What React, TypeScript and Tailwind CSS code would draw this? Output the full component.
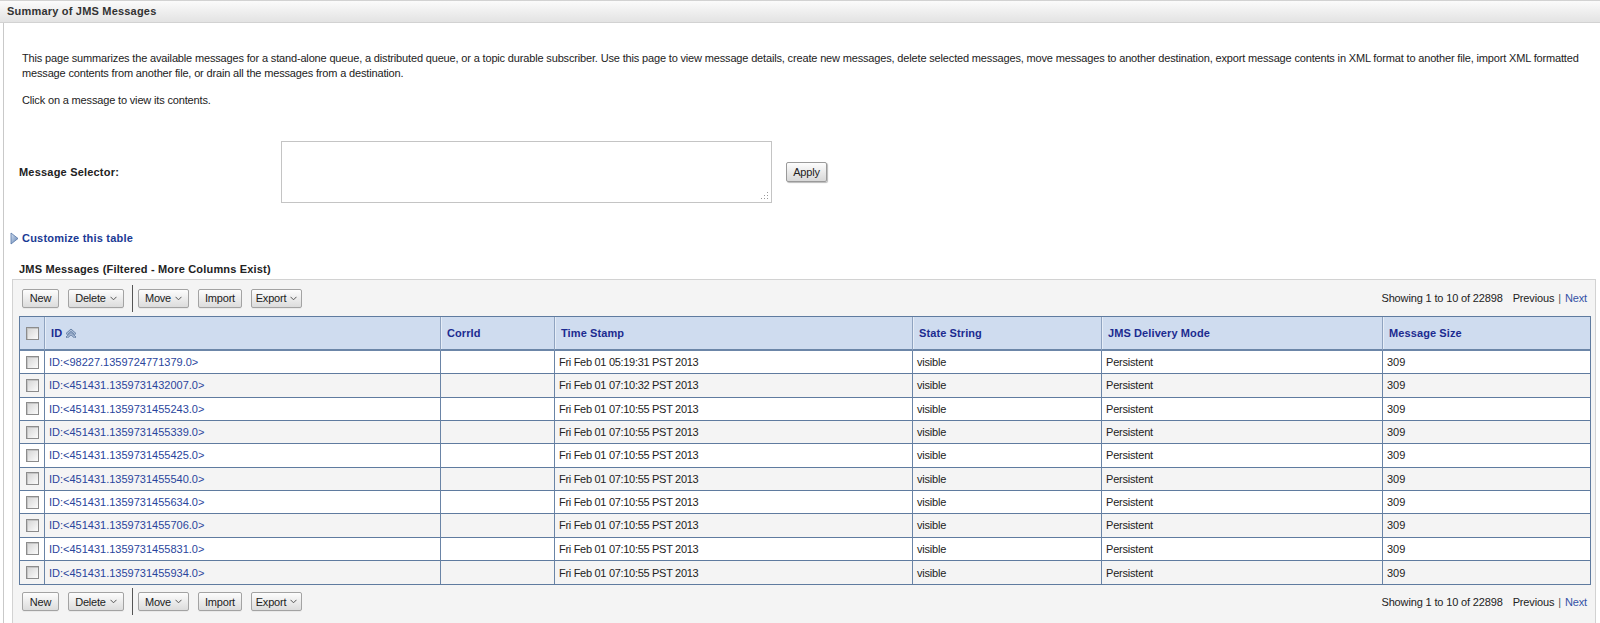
import React from "react"

const rows: [string, string][] = [
  ["ID:<98227.1359724771379.0>", "Fri Feb 01 05:19:31 PST 2013"],
  ["ID:<451431.1359731432007.0>", "Fri Feb 01 07:10:32 PST 2013"],
  ["ID:<451431.1359731455243.0>", "Fri Feb 01 07:10:55 PST 2013"],
  ["ID:<451431.1359731455339.0>", "Fri Feb 01 07:10:55 PST 2013"],
  ["ID:<451431.1359731455425.0>", "Fri Feb 01 07:10:55 PST 2013"],
  ["ID:<451431.1359731455540.0>", "Fri Feb 01 07:10:55 PST 2013"],
  ["ID:<451431.1359731455634.0>", "Fri Feb 01 07:10:55 PST 2013"],
  ["ID:<451431.1359731455706.0>", "Fri Feb 01 07:10:55 PST 2013"],
  ["ID:<451431.1359731455831.0>", "Fri Feb 01 07:10:55 PST 2013"],
  ["ID:<451431.1359731455934.0>", "Fri Feb 01 07:10:55 PST 2013"],
]

function Check() {
  return (
    <div className="mx-auto h-[13px] w-[13px] border border-[#8c8c8c] bg-gradient-to-br from-[#d4d4d4] to-[#fbfbfb] shadow-[inset_1px_1px_0_#c4c4c4]" />
  )
}

function Caret() {
  return (
    <svg width="7" height="5" viewBox="0 0 7 5" className="ml-[4px]">
      <path d="M0.5 0.8 L3.5 3.8 L6.5 0.8" fill="none" stroke="#555" strokeWidth="1" />
    </svg>
  )
}

function Btn({ label, w, menu }: { label: string; w: string; menu?: boolean }) {
  return (
    <button
      className={`flex h-[19px] ${w} items-center justify-center rounded-[2px] border border-[#a3a3a3] bg-gradient-to-b from-[#fdfdfd] to-[#dcdcdc] text-[11px] tracking-[-0.2px] text-[#222] shadow-[0_1px_0_#e9e9e9]`}
    >
      {label}
      {menu && <Caret />}
    </button>
  )
}

function Toolbar() {
  return (
    <div className="flex h-[19px] items-center justify-between">
      <div className="flex items-center pl-[3px]">
        <Btn label="New" w="w-[37px]" />
        <div className="ml-[9px]">
          <Btn label="Delete" w="w-[56px]" menu />
        </div>
        <div className="-my-[4px] ml-[8px] mr-[5px] h-[27px] w-px bg-[#555]" />
        <Btn label="Move" w="w-[51px]" menu />
        <div className="ml-[9px]">
          <Btn label="Import" w="w-[44px]" />
        </div>
        <div className="ml-[9px]">
          <Btn label="Export" w="w-[51px]" menu />
        </div>
      </div>
      <div className="flex items-center pr-[4px] text-[11px] tracking-[-0.15px] text-[#222]">
        <span>Showing 1 to 10 of 22898</span>
        <span className="ml-[10px]">Previous</span>
        <span className="mx-[4px] text-[#555]">|</span>
        <span className="text-[#3552a6]">Next</span>
      </div>
    </div>
  )
}

function SortIcon() {
  return (
    <svg width="12" height="10" viewBox="0 0 12 10" className="ml-[3px]">
      <path d="M1 5.5 L6 1 L11 5.5 L9.5 6.5 L6 3.4 L2.5 6.5 Z" fill="#aebfd8" stroke="#5f7aa2" strokeWidth="0.9" />
      <path d="M1 9 L6 4.5 L11 9 L9.5 10 L6 6.9 L2.5 10 Z" fill="#aebfd8" stroke="#5f7aa2" strokeWidth="0.9" />
    </svg>
  )
}

function Grip() {
  return (
    <svg width="8" height="8" viewBox="0 0 8 8" className="pointer-events-none absolute bottom-[3px] right-[3px]">
      <rect x="6" y="0" width="1" height="1" fill="#9a9a9a" />
      <rect x="3" y="3" width="1" height="1" fill="#9a9a9a" />
      <rect x="6" y="3" width="1" height="1" fill="#9a9a9a" />
      <rect x="0" y="6" width="1" height="1" fill="#9a9a9a" />
      <rect x="3" y="6" width="1" height="1" fill="#9a9a9a" />
      <rect x="6" y="6" width="1" height="1" fill="#9a9a9a" />
    </svg>
  )
}

const th = "h-[34px] border-b-2 border-l border-b-[#6c86a8] border-l-[#8fa3c0] bg-[#cfdcef] px-[6px] text-left align-middle text-[11px] font-bold tracking-[0.1px] text-[#1c2b90] shadow-[inset_1px_0_0_#e6edf7]"
const td = "h-[23.35px] border-l border-l-[#6a84a6] px-[4px] align-middle text-[11px]"

export default function App() {
  return (
    <div className="min-h-screen overflow-hidden bg-white font-['Liberation_Sans',Tahoma,sans-serif] text-[#222]">
      <div className="flex h-[23px] items-center border-b border-t border-[#d2d2d2] bg-gradient-to-b from-[#fbfbfb] to-[#e3e3e3] pl-[7px] text-[11px] font-bold tracking-[0.2px] text-[#333]">
        Summary of JMS Messages
      </div>
      <div className="ml-[3px] border-l border-[#c9c9c9]">
        <div className="pl-[18px] pt-[28px] text-[11px] leading-[15px] tracking-[-0.16px]">
          <p className="whitespace-nowrap">
            This page summarizes the available messages for a stand-alone queue, a distributed queue, or a topic durable subscriber. Use this page to view message details, create new messages, delete selected messages, move messages to another destination, export message contents in XML format to another file, import XML formatted
            <br />
            message contents from another file, or drain all the messages from a destination.
          </p>
          <p className="mt-[12px]">Click on a message to view its contents.</p>
        </div>

        <div className="mt-[33px] flex items-center">
          <div className="w-[277px] shrink-0 pl-[15px] text-[11px] font-bold tracking-[0.2px]">Message Selector:</div>
          <div className="relative shrink-0">
            <textarea className="block h-[62px] w-[491px] resize-none border border-[#c4c4c4] bg-white" />
            <Grip />
          </div>
          <button className="ml-[14px] h-[20px] w-[41px] shrink-0 rounded-[2px] border border-[#9a9a9a] bg-gradient-to-b from-[#fdfdfd] to-[#d8d8d8] text-[11px] tracking-[-0.2px] text-[#222] shadow-[1px_1px_1px_#bbb]">
            Apply
          </button>
        </div>

        <div className="mt-[28px] flex h-[15px] items-center pl-[6px]">
          <svg width="9" height="13" viewBox="0 0 9 13">
            <defs>
              <linearGradient id="tri" x1="0" y1="0" x2="1" y2="1">
                <stop offset="0" stopColor="#d8e4f4" />
                <stop offset="1" stopColor="#5f80b0" />
              </linearGradient>
            </defs>
            <path d="M1 1 L8 6.5 L1 12 Z" fill="url(#tri)" stroke="#5374a6" strokeWidth="0.8" />
          </svg>
          <span className="ml-[3px] text-[11px] font-bold tracking-[0.2px] text-[#1a3a94]">Customize this table</span>
        </div>

        <div className="mt-[16px] pl-[15px] text-[11px] font-bold leading-[15px] tracking-[0.18px] text-[#222]">
          JMS Messages (Filtered - More Columns Exist)
        </div>

        <div className="ml-[8px] mt-[2px] w-[1584px] border border-[#d2d2d2] bg-[#f4f4f4] pb-[12px] pl-[6px] pr-[4px] pt-[9px]">
          <Toolbar />
          <div className="mt-[8px] w-[1572px] border border-[#5f7b9f]">
            <table className="w-full table-fixed border-separate border-spacing-0">
              <colgroup>
                <col className="w-[24px]" />
                <col className="w-[396px]" />
                <col className="w-[114px]" />
                <col className="w-[358px]" />
                <col className="w-[189px]" />
                <col className="w-[281px]" />
                <col />
              </colgroup>
              <thead>
                <tr>
                  <th className="h-[34px] border-b-2 border-b-[#6c86a8] bg-[#cfdcef] p-0 align-middle">
                    <Check />
                  </th>
                  <th className={th}>
                    <span className="flex items-center">
                      ID
                      <SortIcon />
                    </span>
                  </th>
                  <th className={th}>CorrId</th>
                  <th className={th}>Time Stamp</th>
                  <th className={th}>State String</th>
                  <th className={th}>JMS Delivery Mode</th>
                  <th className={th}>Message Size</th>
                </tr>
              </thead>
              <tbody>
                {rows.map(([id, ts], i) => {
                  const bg = i % 2 === 0 ? "bg-white" : "bg-[#f4f4f4]"
                  const bb = i < rows.length - 1 ? "border-b border-b-[#5f7b9f]" : ""
                  return (
                    <tr key={id} className={bg}>
                      <td className={`h-[23.35px] p-0 align-middle ${bb}`}>
                        <Check />
                      </td>
                      <td className={`${td} ${bb} text-[#2a459c]`}>{id}</td>
                      <td className={`${td} ${bb}`}></td>
                      <td className={`${td} ${bb} tracking-[-0.3px] text-[#222]`}>{ts}</td>
                      <td className={`${td} ${bb} tracking-[-0.2px] text-[#222]`}>visible</td>
                      <td className={`${td} ${bb} tracking-[-0.2px] text-[#222]`}>Persistent</td>
                      <td className={`${td} ${bb} text-[#222]`}>309</td>
                    </tr>
                  )
                })}
              </tbody>
            </table>
          </div>
          <div className="mt-[7px]">
            <Toolbar />
          </div>
        </div>
      </div>
    </div>
  )
}
